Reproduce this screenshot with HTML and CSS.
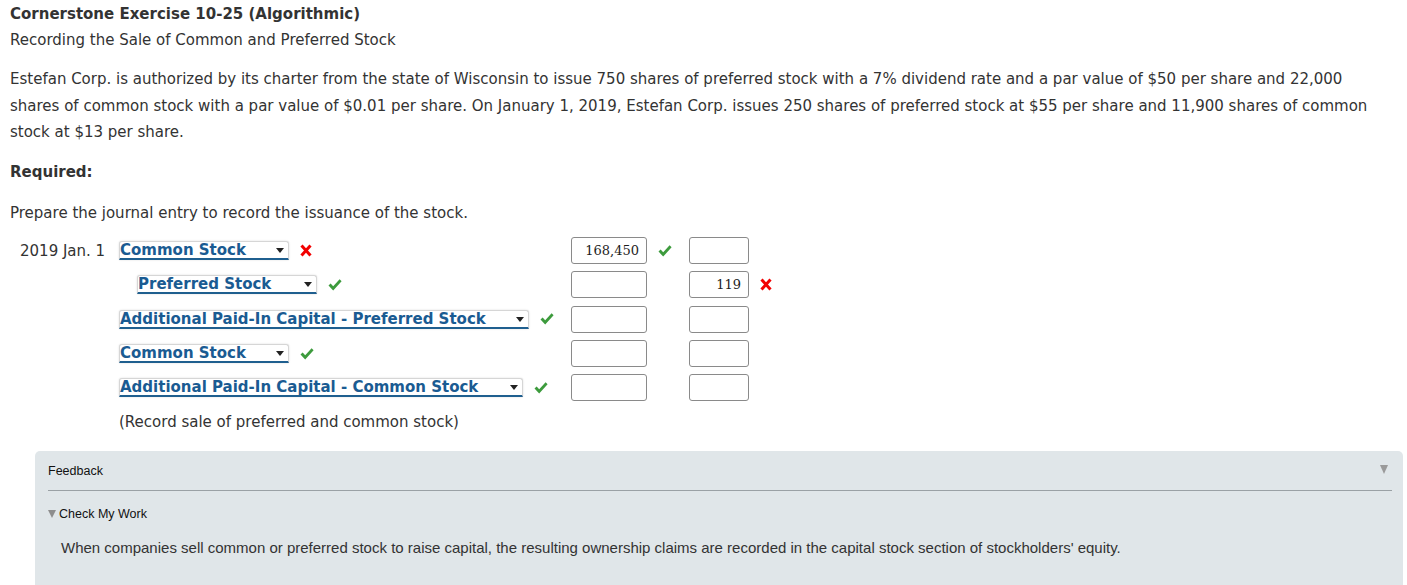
FILE: index.html
```html
<!DOCTYPE html>
<html>
<head>
<meta charset="utf-8">
<link rel="stylesheet" href="styles.css">
</head>
<body>
<div class="page">
  <h1 class="title">Cornerstone Exercise 10-25 (Algorithmic)</h1>
  <div class="subtitle">Recording the Sale of Common and Preferred Stock</div>
  <p class="problem">Estefan Corp. is authorized by its charter from the state of Wisconsin to issue 750 shares of preferred stock with a 7% dividend rate and a par value of $50 per share and 22,000 shares of common stock with a par value of $0.01 per share. On January 1, 2019, Estefan Corp. issues 250 shares of preferred stock at $55 per share and 11,900 shares of common stock at $13 per share.</p>
  <div class="required">Required:</div>
  <p class="prompt">Prepare the journal entry to record the issuance of the stock.</p>

  <div class="journal">
    <div class="date">2019 Jan. 1</div>
    <div class="acct">
      <div class="sel w169"><span>Common Stock</span><i class="arrow"></i></div>
      <svg class="mark" width="12" height="13" viewBox="0 0 12 13"><path d="M1.5 1.5 L10.5 11.5 M10.5 1.5 L1.5 11.5" stroke="#f20000" stroke-width="3" fill="none"/></svg>
    </div>
    <div class="amt"><div class="inp dr">168,450</div><svg class="mark" width="14" height="14" viewBox="0 0 14 14"><path d="M0.5 7.5 L2.6 5.4 L5.2 8.2 L11.6 1.2 L13.6 3.2 L5.2 12.6 Z" fill="#3d9b3d"/></svg></div>
    <div class="amt"><div class="inp cr"></div></div>

    <div class="date"></div>
    <div class="acct indent">
      <div class="sel w179"><span>Preferred Stock</span><i class="arrow"></i></div>
      <svg class="mark" width="14" height="14" viewBox="0 0 14 14"><path d="M0.5 7.5 L2.6 5.4 L5.2 8.2 L11.6 1.2 L13.6 3.2 L5.2 12.6 Z" fill="#3d9b3d"/></svg>
    </div>
    <div class="amt"><div class="inp dr"></div></div>
    <div class="amt"><div class="inp cr">119</div><svg class="mark" width="12" height="13" viewBox="0 0 12 13"><path d="M1.5 1.5 L10.5 11.5 M10.5 1.5 L1.5 11.5" stroke="#f20000" stroke-width="3" fill="none"/></svg></div>

    <div class="date"></div>
    <div class="acct">
      <div class="sel w409"><span>Additional Paid-In Capital - Preferred Stock</span><i class="arrow"></i></div>
      <svg class="mark" width="14" height="14" viewBox="0 0 14 14"><path d="M0.5 7.5 L2.6 5.4 L5.2 8.2 L11.6 1.2 L13.6 3.2 L5.2 12.6 Z" fill="#3d9b3d"/></svg>
    </div>
    <div class="amt"><div class="inp dr"></div></div>
    <div class="amt"><div class="inp cr"></div></div>

    <div class="date"></div>
    <div class="acct">
      <div class="sel w169"><span>Common Stock</span><i class="arrow"></i></div>
      <svg class="mark" width="14" height="14" viewBox="0 0 14 14"><path d="M0.5 7.5 L2.6 5.4 L5.2 8.2 L11.6 1.2 L13.6 3.2 L5.2 12.6 Z" fill="#3d9b3d"/></svg>
    </div>
    <div class="amt"><div class="inp dr"></div></div>
    <div class="amt"><div class="inp cr"></div></div>

    <div class="date"></div>
    <div class="acct">
      <div class="sel w403"><span>Additional Paid-In Capital - Common Stock</span><i class="arrow"></i></div>
      <svg class="mark" width="14" height="14" viewBox="0 0 14 14"><path d="M0.5 7.5 L2.6 5.4 L5.2 8.2 L11.6 1.2 L13.6 3.2 L5.2 12.6 Z" fill="#3d9b3d"/></svg>
    </div>
    <div class="amt"><div class="inp dr"></div></div>
    <div class="amt"><div class="inp cr"></div></div>

    <div class="date"></div>
    <div class="memo">(Record sale of preferred and common stock)</div>
  </div>

  <div class="feedback">
    <div class="fb-head">
      <span>Feedback</span>
      <i class="tri-down"></i>
    </div>
    <div class="fb-check"><i class="tri-small"></i>Check My Work</div>
    <p class="fb-text">When companies sell common or preferred stock to raise capital, the resulting ownership claims are recorded in the capital stock section of stockholders' equity.</p>
  </div>
</div>
</body>
</html>
```
FILE: styles.css
```css
html, body {
  margin: 0;
  padding: 0;
  background: #ffffff;
}
.page {
  padding: 0 0 0 10px;
  font-family: "DejaVu Sans", Verdana, sans-serif;
  font-size: 15px;
  color: #333333;
}
.title {
  font-size: 15px;
  font-weight: bold;
  line-height: 20px;
  margin: 4px 0 0 0;
  color: #333;
}
.subtitle {
  line-height: 20px;
  margin-top: 6px;
}
.problem {
  font-size: 15px;
  line-height: 26.5px;
  margin: 16px 14px 0 0;
}
.required {
  font-weight: bold;
  line-height: 20px;
  margin-top: 16.5px;
}
.prompt {
  line-height: 20px;
  margin: 21px 0 0 0;
}
.journal {
  display: grid;
  grid-template-columns: 109px 452px 118px 200px;
  grid-auto-rows: 34.3px;
  align-items: center;
  margin-top: 10.5px;
}
.date {
  padding-left: 10px;
}
.acct {
  display: flex;
  align-items: center;
  gap: 11px;
}
.acct.indent {
  padding-left: 18px;
}
.sel {
  box-sizing: border-box;
  height: 19px;
  background: #fff;
  border: 1px solid #d6d6d6;
  border-bottom: 2px solid #1f5f8f;
  border-radius: 3px 3px 0 0;
  box-shadow: 0 0 2px rgba(0,0,0,0.15);
  display: flex;
  align-items: center;
  justify-content: space-between;
  padding: 0 4px 0 0;
  color: #1a5b92;
  font-weight: bold;
  font-size: 15px;
  line-height: 16px;
}
.w169 { width: 170px; }
.w179 { width: 180px; }
.w409 { width: 410px; }
.w403 { width: 404px; }
.arrow {
  width: 0;
  height: 0;
  border-left: 4px solid transparent;
  border-right: 4px solid transparent;
  border-top: 5px solid #222;
  margin-top: 1px;
}
.mark {
  display: block;
  flex: none;
}
.amt {
  display: flex;
  align-items: center;
  gap: 11px;
}
.inp {
  box-sizing: border-box;
  height: 27px;
  border: 1px solid #8a8a8a;
  border-radius: 3px;
  background: #fff;
  font-family: "DejaVu Serif", "Liberation Serif", serif;
  font-size: 13px;
  color: #1e1e1e;
  text-align: right;
  padding: 0 7px;
  line-height: 25px;
}
.inp.dr { width: 76px; }
.inp.cr { width: 60px; }
.memo {
  grid-column: 2 / 5;
}
.feedback {
  margin: 12px 4px 0 25px;
  background: #e0e6e9;
  border-radius: 5px 5px 0 0;
  padding: 0 11px 30px 13px;
  font-family: "Liberation Sans", Arial, sans-serif;
  font-size: 12.5px;
  color: #111;
}
.fb-head {
  display: flex;
  justify-content: space-between;
  align-items: center;
  height: 39px;
  border-bottom: 1px solid #9aa1a5;
}
.tri-down {
  width: 0;
  height: 0;
  border-left: 4.5px solid transparent;
  border-right: 4.5px solid transparent;
  border-top: 9px solid #9a9a9a;
  margin-right: 4px;
  margin-top: -2px;
}
.fb-check {
  display: flex;
  align-items: center;
  height: 20px;
  margin-top: 13px;
}
.tri-small {
  width: 0;
  height: 0;
  border-left: 4.5px solid transparent;
  border-right: 4.5px solid transparent;
  border-top: 8px solid #8e8e8e;
  margin-right: 3px;
}
.fb-text {
  margin: 14px 0 0 13px;
  font-size: 15px;
  line-height: 20px;
  color: #333;
}
```
